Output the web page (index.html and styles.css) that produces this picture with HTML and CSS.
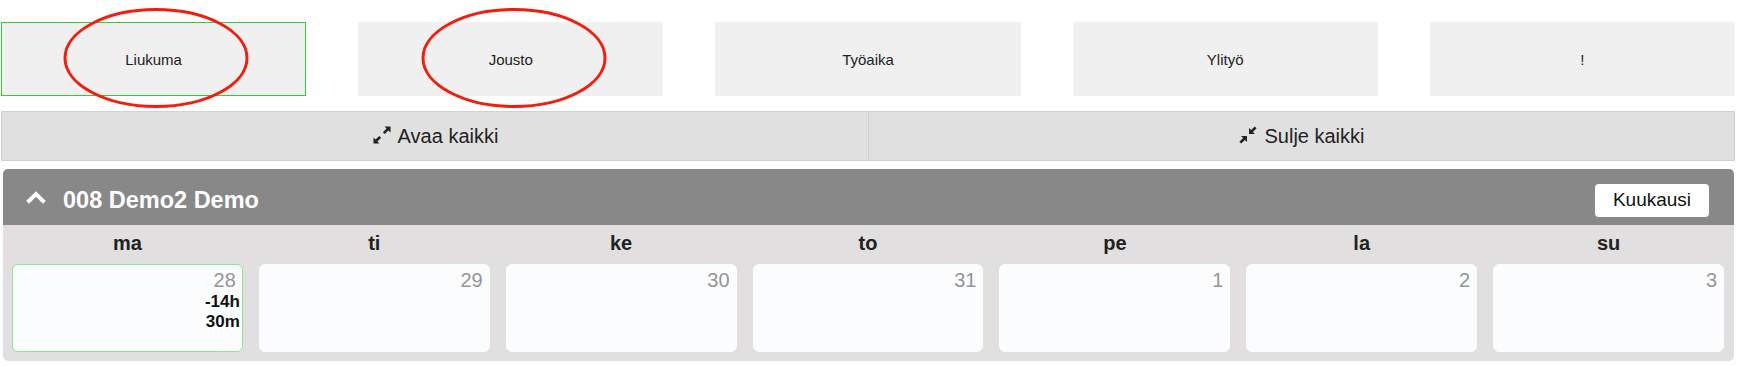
FILE: index.html
```html
<!DOCTYPE html>
<html lang="fi">
<head>
<meta charset="utf-8">
<title>Kalenteri</title>
<link rel="stylesheet" href="styles.css">
</head>
<body>
<div class="page">
  <div class="tabs">
    <div class="tab tab-active">Liukuma</div>
    <div class="tab">Jousto</div>
    <div class="tab">Työaika</div>
    <div class="tab">Ylityö</div>
    <div class="tab">!</div>
  </div>

  <div class="toggles">
    <div class="toggle">
      <svg class="ticon" viewBox="0 0 20 20" width="20" height="20" aria-hidden="true">
        <path d="M1.5 18.5 L1.5 12.5 L3.6 14.6 L7.3 10.9 L9.1 12.7 L5.4 16.4 L7.5 18.5 Z" fill="#222"/>
        <path d="M18.5 1.5 L18.5 7.5 L16.4 5.4 L12.7 9.1 L10.9 7.3 L14.6 3.6 L12.5 1.5 Z" fill="#222"/>
      </svg>
      <span>Avaa kaikki</span>
    </div>
    <div class="toggle">
      <svg class="ticon" viewBox="0 0 20 20" width="20" height="20" aria-hidden="true">
        <path d="M9 11 L9 17 L6.9 14.9 L3.2 18.6 L1.4 16.8 L5.1 13.1 L3 11 Z" fill="#222"/>
        <path d="M11 9 L11 3 L13.1 5.1 L16.8 1.4 L18.6 3.2 L14.9 6.9 L17 9 Z" fill="#222"/>
      </svg>
      <span>Sulje kaikki</span>
    </div>
  </div>

  <div class="panel">
    <div class="panel-head">
      <div class="panel-title">
        <svg class="chev" viewBox="0 0 20 14" width="20" height="14" aria-hidden="true">
          <path d="M3 11 L10 4 L17 11" fill="none" stroke="#fff" stroke-width="4" stroke-linecap="square" stroke-linejoin="miter"/>
        </svg>
        <span class="title-text">008 Demo2 Demo</span>
      </div>
      <div class="month-btn">Kuukausi</div>
    </div>
    <div class="panel-body">
      <div class="week">
        <div class="dayname">ma</div>
        <div class="dayname">ti</div>
        <div class="dayname">ke</div>
        <div class="dayname">to</div>
        <div class="dayname">pe</div>
        <div class="dayname">la</div>
        <div class="dayname">su</div>

        <div class="cell cell-today">
          <div class="num">28</div>
          <div class="val">-14h<br>30m</div>
        </div>
        <div class="cell"><div class="num">29</div></div>
        <div class="cell"><div class="num">30</div></div>
        <div class="cell"><div class="num">31</div></div>
        <div class="cell"><div class="num">1</div></div>
        <div class="cell"><div class="num">2</div></div>
        <div class="cell"><div class="num">3</div></div>
      </div>
    </div>
  </div>

  <svg class="marks" width="1746" height="130" viewBox="0 0 1746 130" aria-hidden="true">
    <ellipse cx="156" cy="58" rx="91" ry="48.5" fill="none" stroke="#f21d0d" stroke-width="3"/>
    <ellipse cx="514" cy="58" rx="91" ry="48.5" fill="none" stroke="#f21d0d" stroke-width="3"/>
  </svg>
</div>
</body>
</html>
```

FILE: styles.css
```css
* { box-sizing: border-box; }

html, body {
  margin: 0;
  padding: 0;
  background: #ffffff;
}

body {
  font-family: "Liberation Sans", Arial, Helvetica, sans-serif;
  color: #222;
}

.page {
  position: relative;
  width: 1746px;
  height: 366px;
  padding-top: 22px;
  overflow: hidden;
}

.tabs {
  display: grid;
  grid-template-columns: repeat(5, 1fr);
  column-gap: 52px;
  margin: 0 11px 0 1px;
}

.tab {
  height: 74px;
  background: #f0f0f0;
  border: 1px solid #f0f0f0;
  display: flex;
  align-items: center;
  justify-content: center;
  font-size: 15px;
  color: #222;
}

.tab-active {
  border-color: #2fd12f;
}

.toggles {
  display: grid;
  grid-template-columns: 1fr 1fr;
  margin: 15px 11px 0 1px;
  height: 50px;
  border: 1px solid #d2d2d2;
  background: #e0e0e0;
}

.toggle {
  display: flex;
  align-items: center;
  justify-content: center;
  gap: 6px;
  font-size: 20px;
  color: #222;
}

.toggle + .toggle {
  border-left: 1px solid #cfcfcf;
}

.ticon {
  display: block;
  margin-top: -2px;
}

.panel {
  margin: 8px 12px 0 3px;
  border-radius: 5px;
  overflow: hidden;
  background: #e1dfdf;
}

.panel-head {
  height: 56px;
  background: #888888;
  display: flex;
  align-items: center;
  justify-content: space-between;
  padding: 0 25px 0 23px;
}

.panel-title {
  display: flex;
  align-items: center;
  gap: 17px;
  color: #fff;
  font-weight: bold;
  font-size: 23.5px;
}

.title-text {
  padding-top: 6px;
}

.chev {
  display: block;
  margin-top: -1px;
}

.month-btn {
  background: #fff;
  border-radius: 4px;
  height: 33px;
  width: 114px;
  display: flex;
  align-items: center;
  justify-content: center;
  font-size: 19px;
  color: #111;
  margin-top: 6px;
}

.panel-body {
  padding: 0 10px 9px 9px;
}

.week {
  display: grid;
  grid-template-columns: repeat(7, 1fr);
  grid-template-rows: 39px 88px;
  column-gap: 16px;
}

.dayname {
  display: flex;
  align-items: center;
  justify-content: center;
  font-size: 20px;
  font-weight: bold;
  color: #222;
  padding-bottom: 3px;
}

.cell {
  background: #fbfcfe;
  border-radius: 6px;
  border: 1px solid #fbfcfe;
  padding: 4px 6px 0 0;
  text-align: right;
}

.cell-today {
  border-color: #83ef83;
}

.num {
  font-size: 20px;
  line-height: 22px;
  color: #959595;
}

.val {
  font-size: 17px;
  line-height: 20px;
  font-weight: bold;
  color: #111;
  margin-top: 1px;
  margin-right: -4px;
}

.marks {
  position: absolute;
  left: 0;
  top: 0;
  pointer-events: none;
}
```
